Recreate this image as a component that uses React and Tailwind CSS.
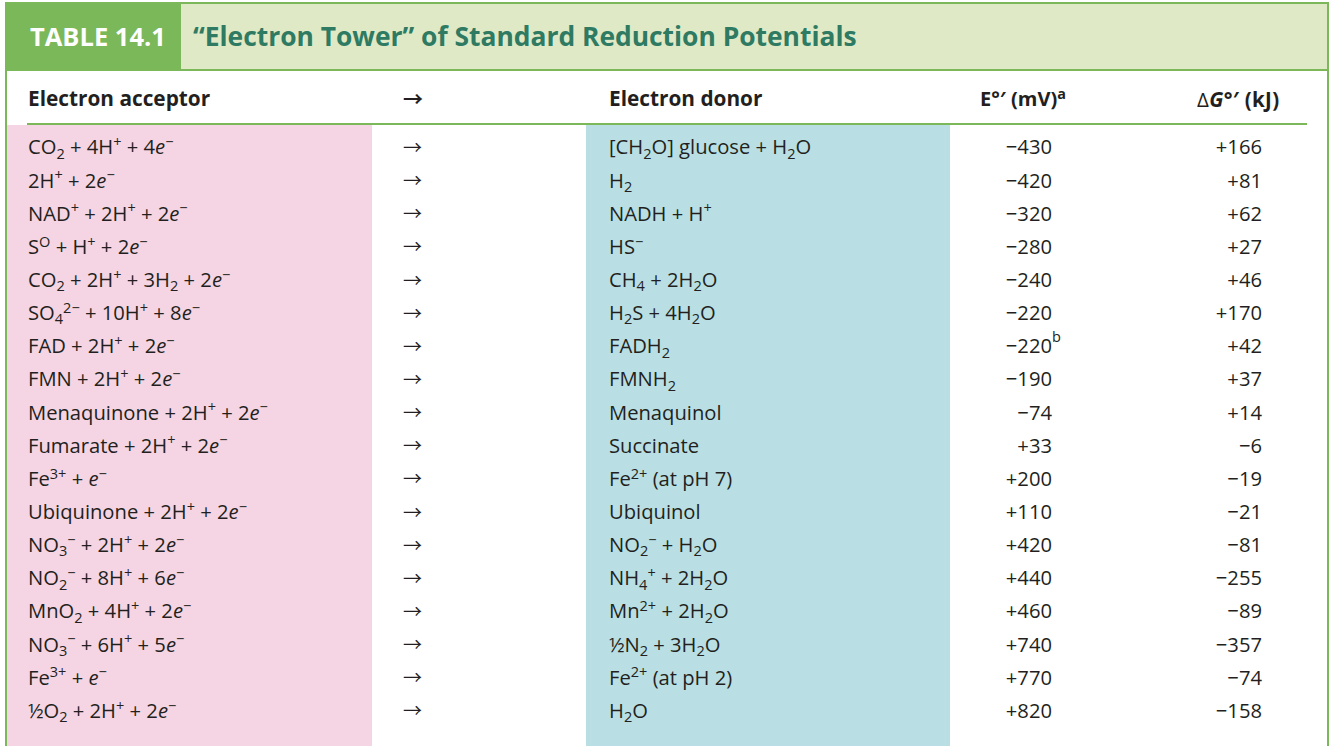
import React from "react";

const Sb = ({ children }) => <sub className="text-[0.72em] -bottom-[0.3em]">{children}</sub>;
const Sp = ({ children }) => <sup className="text-[0.72em] -top-[0.5em]">{children}</sup>;
const El = () => (
  <>
    <i>e</i>
    <Sp>−</Sp>
  </>
);

const rows = [
  [<>CO<Sb>2</Sb> + 4H<Sp>+</Sp> + 4<El /></>, <>[CH<Sb>2</Sb>O] glucose + H<Sb>2</Sb>O</>, "−430", null, "+166"],
  [<>2H<Sp>+</Sp> + 2<El /></>, <>H<Sb>2</Sb></>, "−420", null, "+81"],
  [<>NAD<Sp>+</Sp> + 2H<Sp>+</Sp> + 2<El /></>, <>NADH + H<Sp>+</Sp></>, "−320", null, "+62"],
  [<>S<Sp>O</Sp> + H<Sp>+</Sp> + 2<El /></>, <>HS<Sp>−</Sp></>, "−280", null, "+27"],
  [<>CO<Sb>2</Sb> + 2H<Sp>+</Sp> + 3H<Sb>2</Sb> + 2<El /></>, <>CH<Sb>4</Sb> + 2H<Sb>2</Sb>O</>, "−240", null, "+46"],
  [<>SO<Sb>4</Sb><Sp>2−</Sp> + 10H<Sp>+</Sp> + 8<El /></>, <>H<Sb>2</Sb>S + 4H<Sb>2</Sb>O</>, "−220", null, "+170"],
  [<>FAD + 2H<Sp>+</Sp> + 2<El /></>, <>FADH<Sb>2</Sb></>, "−220", "b", "+42"],
  [<>FMN + 2H<Sp>+</Sp> + 2<El /></>, <>FMNH<Sb>2</Sb></>, "−190", null, "+37"],
  [<>Menaquinone + 2H<Sp>+</Sp> + 2<El /></>, <>Menaquinol</>, "−74", null, "+14"],
  [<>Fumarate + 2H<Sp>+</Sp> + 2<El /></>, <>Succinate</>, "+33", null, "−6"],
  [<>Fe<Sp>3+</Sp> + <El /></>, <>Fe<Sp>2+</Sp> (at pH 7)</>, "+200", null, "−19"],
  [<>Ubiquinone + 2H<Sp>+</Sp> + 2<El /></>, <>Ubiquinol</>, "+110", null, "−21"],
  [<>NO<Sb>3</Sb><Sp>−</Sp> + 2H<Sp>+</Sp> + 2<El /></>, <>NO<Sb>2</Sb><Sp>−</Sp> + H<Sb>2</Sb>O</>, "+420", null, "−81"],
  [<>NO<Sb>2</Sb><Sp>−</Sp> + 8H<Sp>+</Sp> + 6<El /></>, <>NH<Sb>4</Sb><Sp>+</Sp> + 2H<Sb>2</Sb>O</>, "+440", null, "−255"],
  [<>MnO<Sb>2</Sb> + 4H<Sp>+</Sp> + 2<El /></>, <>Mn<Sp>2+</Sp> + 2H<Sb>2</Sb>O</>, "+460", null, "−89"],
  [<>NO<Sb>3</Sb><Sp>−</Sp> + 6H<Sp>+</Sp> + 5<El /></>, <>½N<Sb>2</Sb> + 3H<Sb>2</Sb>O</>, "+740", null, "−357"],
  [<>Fe<Sp>3+</Sp> + <El /></>, <>Fe<Sp>2+</Sp> (at pH 2)</>, "+770", null, "−74"],
  [<>½O<Sb>2</Sb> + 2H<Sp>+</Sp> + 2<El /></>, <>H<Sb>2</Sb>O</>, "+820", null, "−158"],
];

const rowCls = "h-[33.15px] flex items-center whitespace-nowrap";
const arrowFont = { fontFamily: '"Noto Sans CJK JP", "DejaVu Sans", sans-serif' };

export default function App() {
  return (
    <div
      className="w-[1332px] h-[746px] overflow-hidden bg-white pl-[5px] pt-[2px] text-[#231f20]"
      style={{ fontFamily: '"Open Sans", "Noto Sans", sans-serif' }}
    >
      <div className="w-[1324px] h-[760px] border-l-2 border-t-2 border-r-2 border-[#7ab85a] flex flex-col">
        {/* Title band */}
        <div className="h-[67px] flex border-b-2 border-[#7ab85a]">
          <div className="w-[174px] bg-[#7ab85a] flex items-center pl-[23px] text-white font-bold text-[25.5px]">
            TABLE 14.1
          </div>
          <div className="flex-1 bg-[#dfe9c6] flex items-center pl-[12px] text-[#2e7a62] font-bold text-[26.4px]">
            “Electron Tower” of Standard Reduction Potentials
          </div>
        </div>

        {/* Column headers */}
        <div className="h-[54px] pl-[20px] pr-[20px]">
          <div className="h-full flex items-center pt-[4px] border-b-2 border-[#7ab85a] font-bold text-[20.8px] whitespace-nowrap">
            <div className="w-[355px] pl-[1px]">Electron acceptor</div>
            <div className="w-[224px] pl-[21px] font-bold text-[20px] leading-none" style={arrowFont}>→</div>
            <div className="w-[374px] pl-[3px]">Electron donor</div>
            <div className="w-[205px] text-[20px]">
              E°′ (mV)<Sp>a</Sp>
            </div>
            <div className="flex-1 pl-[12px] text-[20.5px] tracking-[0.3px]">
              <span className="font-normal">Δ</span>
              <i>G</i>°′ (kJ)
            </div>
          </div>
        </div>

        {/* Body */}
        <div className="flex-1 flex text-[20.2px]">
          <div className="w-[365px] bg-[#f5d5e3] pl-[21px] pt-[5px] flex flex-col">
            {rows.map((r, i) => (
              <div key={i} className={rowCls}>
                <span>{r[0]}</span>
              </div>
            ))}
          </div>
          <div className="w-[214px] pl-[31px] pt-[5px] flex flex-col text-[19px]" style={arrowFont}>
            {rows.map((r, i) => (
              <div key={i} className={rowCls + " leading-none"}>
                →
              </div>
            ))}
          </div>
          <div className="w-[364px] bg-[#b9dfe4] pl-[23px] pt-[5px] flex flex-col">
            {rows.map((r, i) => (
              <div key={i} className={rowCls}>
                <span>{r[1]}</span>
              </div>
            ))}
          </div>
          <div className="w-[150px] pr-[48px] pt-[5px] flex flex-col">
            {rows.map((r, i) => (
              <div key={i} className={rowCls + " justify-end"}>
                <span className="relative">
                  {r[2]}
                  {r[3] && (
                    <sup className="absolute left-full top-[-0.1em] text-[0.72em] leading-none">{r[3]}</sup>
                  )}
                </span>
              </div>
            ))}
          </div>
          <div className="flex-1 pr-[65px] pt-[5px] flex flex-col">
            {rows.map((r, i) => (
              <div key={i} className={rowCls + " justify-end"}>
                {r[4]}
              </div>
            ))}
          </div>
        </div>
      </div>
    </div>
  );
}
